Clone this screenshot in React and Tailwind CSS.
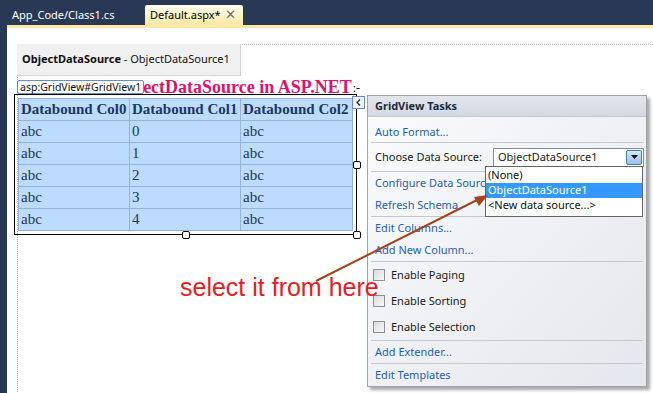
import React from 'react';

const rows = [
    ['abc', '0', 'abc'],
    ['abc', '1', 'abc'],
    ['abc', '2', 'abc'],
    ['abc', '3', 'abc'],
    ['abc', '4', 'abc'],
];

const Handle = ({ className }) => (
    <div className={`absolute w-[8px] h-[8px] bg-white border border-black rounded-[2px] ${className}`} />
);

const Sep = () => <div className="mx-[3px] h-px bg-[#c3c7ce]" />;

const LinkRow = ({ children, h = 'h-[22px]' }) => (
    <div className={`${h} flex items-center pl-[7px] text-[#1f5fae]`}>{children}</div>
);

const CheckRow = ({ label }) => (
    <div className="h-[26px] flex items-center pl-[5px] gap-[6px] text-[#1b1b1b]">
        <div className="w-[12px] h-[12px] border border-[#8e8f8f] bg-gradient-to-br from-[#dcdcdc] to-[#f8f8f8]" />
        <span>{label}</span>
    </div>
);

const TasksPanel = () => (
    <div className="absolute left-[367px] top-[95px] w-[280px] h-[292px] border border-[#9ea4ae] bg-gradient-to-br from-[#fbfbfc] to-[#e4e7ed] shadow-[3px_3px_3px_rgba(0,0,0,0.35)] text-[11px]">
        <div className="h-[21px] flex items-center pl-[7px] font-bold text-[#1b2a3f] bg-gradient-to-b from-[#e2e6ec] to-[#d3d9e2] border-b border-[#c3c8d0]">
            GridView Tasks
        </div>
        <div className="h-[5px]" />
        <LinkRow h="h-[20px]">Auto Format...</LinkRow>
        <Sep />
        <div className="h-[28px] flex items-center pl-[7px] text-[#1b1b1b]">
            <span className="w-[118px]">Choose Data Source:</span>
            <div className="w-[151px] h-[19px] border border-[#7f8ea4] bg-white flex items-center pl-[4px] justify-between">
                <span>ObjectDataSource1</span>
                <div className="w-[16px] h-[15px] mr-[1px] border border-[#3c7fb1] rounded-[2px] bg-gradient-to-b from-[#d6e7f9] to-[#98c0ea] flex items-center justify-center">
                    <svg width="7" height="4" viewBox="0 0 7 4"><path d="M0 0h7L3.5 4z" fill="#111" /></svg>
                </div>
            </div>
        </div>
        <Sep />
        <LinkRow>Configure Data Source...</LinkRow>
        <LinkRow>Refresh Schema</LinkRow>
        <Sep />
        <LinkRow>Edit Columns...</LinkRow>
        <LinkRow>Add New Column...</LinkRow>
        <Sep />
        <CheckRow label="Enable Paging" />
        <CheckRow label="Enable Sorting" />
        <CheckRow label="Enable Selection" />
        <Sep />
        <LinkRow>Add Extender...</LinkRow>
        <Sep />
        <LinkRow>Edit Templates</LinkRow>

        {/* open select list */}
        <div className="absolute left-[117px] top-[70px] w-[158px] h-[51px] bg-white border border-[#646464] py-[1px] text-[#111]">
            <div className="h-[15px] flex items-center pl-[2px]">(None)</div>
            <div className="h-[15px] flex items-center pl-[2px] bg-[#3399ff] text-white">ObjectDataSource1</div>
            <div className="h-[15px] flex items-center pl-[2px]">&lt;New data source...&gt;</div>
        </div>
    </div>
);

export default function App() {
    return (
        <div className="relative w-[653px] h-[393px] overflow-hidden bg-[#293955] font-['Noto_Sans',sans-serif]">
            {/* tab strip */}
            <div className="h-[25px] flex items-end pl-[7px] text-[11px]">
                <div className="h-[20px] flex items-center pl-[5px] w-[138px] text-white">App_Code/Class1.cs</div>
                <div className="h-[20px] w-[98px] rounded-t-[2px] bg-gradient-to-b from-[#fffcee] to-[#fbe8a4] flex items-center justify-between px-[5px] text-black">
                    <span>Default.aspx*</span>
                    <span className="text-[#6f6f6f] text-[13px] mr-[2px]">✕</span>
                </div>
            </div>

            {/* design surface */}
            <div className="ml-[7px] h-[368px] bg-white border-t-[3px] border-[#fbe8a4] pt-[16px] pl-[10px]">
                <div className="h-[400px] border-t border-l border-dotted border-[#b5b5b5]">
                    <div className="-mt-px -ml-px w-[224px] h-[32px] bg-[#f0f0f0] border-r border-b border-[#d3d3d3] flex items-center pl-[5px] text-[11px] text-[#111]">
                        <span className="font-bold">ObjectDataSource</span>
                        <span>&nbsp;- ObjectDataSource1</span>
                    </div>

                    <div className="relative -ml-[4px] mt-[1px]">
                        {/* heading behind the tag */}
                        <div className="w-[346px] h-[17px] overflow-hidden whitespace-nowrap flex justify-end items-end font-['Liberation_Serif',serif]">
                            <span className="text-[18px] leading-[14px] font-bold text-[#e0106b] underline decoration-1 underline-offset-[1px]">ObjectDataSource in ASP.NET</span>
                            <span className="text-[12px] leading-[12px] ml-[1px]">:-</span>
                        </div>
                        <div className="absolute left-[3px] top-[3px] h-[14px] px-[2px] bg-white border border-[#6a8ec2] rounded-[2px] flex items-center text-[10.5px] leading-none text-[#111]">
                            asp:GridView#GridView1
                        </div>

                        {/* selected grid */}
                        <div className="relative w-[343px] h-[141px] border border-black p-[3px]">
                            <table className="border-collapse font-['Liberation_Serif',serif] text-[15px] text-[#1c355e] bg-[#bddcfd]">
                                <thead>
                                    <tr className="h-[22px]">
                                        {['Databound Col0', 'Databound Col1', 'Databound Col2'].map((h, i) => (
                                            <th key={i} className={`${i === 2 ? 'w-[112px]' : 'w-[111px]'} border border-[#93b4da] text-left font-bold px-[2px] leading-none whitespace-nowrap text-[#1b3763]`}>{h}</th>
                                        ))}
                                    </tr>
                                </thead>
                                <tbody>
                                    {rows.map((r, i) => (
                                        <tr key={i} className="h-[22px]">
                                            {r.map((c, j) => (
                                                <td key={j} className="border border-[#93b4da] px-[2px] leading-none">{c}</td>
                                            ))}
                                        </tr>
                                    ))}
                                </tbody>
                            </table>
                            <Handle className="right-[-5px] top-[66px]" />
                            <Handle className="left-[167px] bottom-[-5px]" />
                            <Handle className="right-[-5px] bottom-[-5px]" />
                        </div>
                        <div className="absolute left-[338px] top-[19px] w-[13px] h-[13px] bg-[#eef2f8] border border-[#6d8ab5] flex items-center justify-center">
                            <svg width="5" height="7" viewBox="0 0 5 7"><path d="M4 0.5L1 3.5L4 6.5" stroke="#222" strokeWidth="1.2" fill="none" /></svg>
                        </div>
                    </div>
                </div>
            </div>

            <TasksPanel />

            {/* annotation */}
            <svg className="absolute left-0 top-0 pointer-events-none" width="653" height="393">
                <line x1="316" y1="281" x2="479" y2="199" stroke="#a3421d" strokeWidth="2" />
                <path d="M488 195L474 197L479 206Z" fill="#a3421d" />
            </svg>
            <div className="absolute left-[180px] top-[275px] text-[25px] leading-[25px] text-[#e3201f] font-['Liberation_Sans',sans-serif] whitespace-nowrap">
                select it from here
            </div>
        </div>
    );
}
